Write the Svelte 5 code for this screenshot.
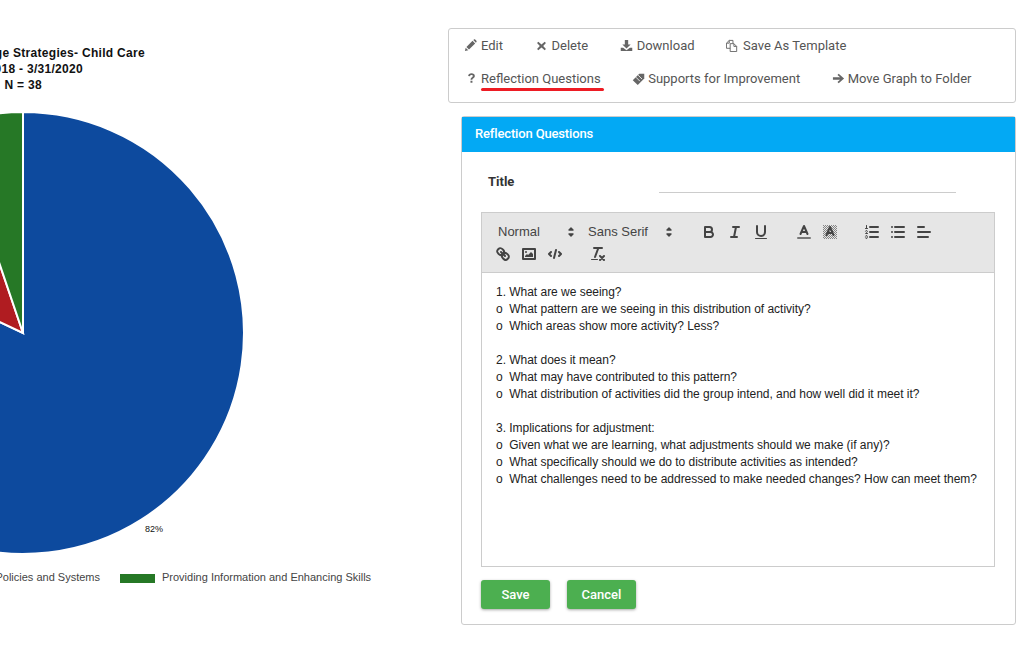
<script>
  const row1 = [
    { icon: "edit", label: "Edit" },
    { icon: "remove", label: "Delete" },
    { icon: "download", label: "Download" },
    { icon: "copy", label: "Save As Template" }
  ];
  const row2 = [
    { icon: "question", label: "Reflection Questions", active: true },
    { icon: "tag", label: "Supports for Improvement" },
    { icon: "arrow", label: "Move Graph to Folder" }
  ];
  const lines = [
    "1. What are we seeing?",
    "o  What pattern are we seeing in this distribution of activity?",
    "o  Which areas show more activity? Less?",
    "",
    "2. What does it mean?",
    "o  What may have contributed to this pattern?",
    "o  What distribution of activities did the group intend, and how well did it meet it?",
    "",
    "3. Implications for adjustment:",
    "o  Given what we are learning, what adjustments should we make (if any)?",
    "o  What specifically should we do to distribute activities as intended?",
    "o  What challenges need to be addressed to make needed changes? How can meet them?"
  ];

  // pie geometry
  const cx = 23, cy = 333, r = 221;
  function point(deg) {
    const a = (deg * Math.PI) / 180;
    return `${(cx + r * Math.sin(a)).toFixed(1)} ${(cy - r * Math.cos(a)).toFixed(1)}`;
  }
  function slice(from, to) {
    const large = to - from > 180 ? 1 : 0;
    return `M${cx} ${cy}L${point(from)}A${r} ${r} 0 ${large} 1 ${point(to)}Z`;
  }
</script>

{#snippet barIcon(name)}
  <svg class="bar-icon" viewBox="0 0 14 14" aria-hidden="true">
    {#if name === "edit"}
      <path d="M1 13l.8-3.6 2.800 2.800zM2.600 8.600l6.600-6.600 2.800 2.800-6.600 6.600zM10 1.200l.8-.6c.4-.3.9-.3 1.200 0l1.400 1.400c.3.3.3.8 0 1.200l-.6.8z" />
    {:else if name === "remove"}
      <path d="M3.600 3L7 6l3.400-3 1.400 1.400L8.800 7.600l3 3.200-1.400 1.400L7 9.200l-3.400 3-1.400-1.400 3-3.200-3-3.200z" />
    {:else if name === "download"}
      <path d="M5.200 1h3.600v5h2.700L7 10.200 2.500 6h2.700zM.8 9.400h2.600L7 12l3.600-2.600h2.600V13H.8z" />
    {:else if name === "copy"}
      <path class="line" d="M3.500 1.500h4v3M.5 10V4.500l3-3v3h-3M.5 10h4M4.500 5h4l3 3v5.500h-7zM8.500 5v3h3" />
    {:else if name === "question"}
      <path d="M3.400 4.200C3.500 2.300 5 1.400 7 1.400c2.100 0 3.600 1.100 3.600 2.900 0 1.400-.9 2-1.800 2.600-.7.5-.9.8-.9 1.500H6c0-1.300.3-1.900 1.200-2.500.8-.6 1.200-.9 1.200-1.500 0-.7-.6-1.100-1.400-1.100-.9 0-1.500.5-1.600 1.400zM5.900 9.500h2.100v2.200H5.900z" />
    {:else if name === "tag"}
      <path d="M.8 8.800L7.800 1.800h5.400v5.200l-7 7z" />
      <path class="cut" d="M4.200 5.600l4.200 4.200M6.600 3.400l4.200 4.200" />
    {:else}
      <path d="M7.200 1.800L13 7l-5.800 5.200-1.300-1.400 2.800-2.500H1V5.700h7.700L5.900 3.200z" />
    {/if}
  </svg>
{/snippet}

{#snippet toolIcon(name)}
  <svg class="ql" viewBox="0 0 18 18" aria-hidden="true">
    {#if name === "bold"}
      <path d="M5,4H9.500A2.500,2.500,0,0,1,12,6.500v0A2.500,2.500,0,0,1,9.500,9H5V4Z" />
      <path d="M5,9h5.500A2.500,2.500,0,0,1,13,11.500v0A2.500,2.500,0,0,1,10.500,14H5V9Z" />
    {:else if name === "italic"}
      <path d="M7 4h6M5 14h6M8 14l2-10" />
    {:else if name === "underline"}
      <path d="M5,3V9a4,4,0,0,0,4,4h0a4,4,0,0,0,4-4V3" />
      <rect class="solid" x="3" y="15" width="12" height="1" rx="0.5" />
    {:else if name === "color"}
      <path d="M5.500 11L9 3l3.500 8M11.630 9H6.380" />
      <path class="under" d="M3 15h12" />
    {:else if name === "background"}
      <defs>
        <pattern id="hatch" width="2" height="2" patternUnits="userSpaceOnUse">
          <rect class="solid" width="1" height="1" />
          <rect class="solid" x="1" y="1" width="1" height="1" />
        </pattern>
      </defs>
      <rect class="hatch" x="2" y="2" width="14" height="14" />
      <path d="M5.500 12L9 4l3.500 8M11.630 10H6.380" />
    {:else if name === "ordered"}
      <path d="M7 4h8M7 9h8M7 14h8" />
      <path class="thin" d="M2.500 5.500h2M3.500 2.500v3M4.500 10.500h-2c0-.234 1.850-1.076 1.850-2.234A.959.959 0 0 0 2.500 8.156M2.500 14.846a.959.959 0 0 0 1.850-.109A.7.7 0 0 0 3.750 14a.688.688 0 0 0 .6-.736.959.959 0 0 0-1.850-.109" />
    {:else if name === "bullet"}
      <path d="M6 4h9M6 9h9M6 14h9M3 4h0M3 9h0M3 14h0" />
    {:else if name === "align"}
      <path d="M3 9h12M3 14h10M3 4h6" />
    {:else if name === "link"}
      <path d="M7 7l4 4" />
      <path d="M8.900,4.577a3.476,3.476,0,0,1,.36,4.679A3.476,3.476,0,0,1,4.577,8.900C3.185,7.500,2.035,6.400,4.217,4.217S7.500,3.185,8.900,4.577Z" />
      <path d="M13.423,9.100a3.476,3.476,0,0,0-4.679-.36,3.476,3.476,0,0,0,.36,4.679c1.392,1.392,2.500,2.542,4.679.36S14.815,10.500,13.423,9.100Z" />
    {:else if name === "image"}
      <rect x="3" y="4" width="12" height="10" />
      <circle class="solid" cx="6" cy="7" r="1" />
      <path class="solid" d="M5 12v-1l2-2 1 1 3-3 2 2v3z" />
    {:else if name === "code"}
      <path d="M5 7L3 9l2 2M13 7l2 2-2 2M10 5L8 13" />
    {:else}
      <path d="M5 3h8M6 12L9.350 3M11 11l4 4M15 11l-4 4" />
      <rect class="solid" x="2" y="14" width="7" height="1" rx="0.5" />
    {/if}
  </svg>
{/snippet}

{#snippet picker(label, cls)}
  <span class="picker {cls}">
    <span class="picker-label">{label}</span>
    <svg viewBox="0 0 18 18" aria-hidden="true">
      <path d="M7 11l2 2 2-2zM7 7l2-2 2 2z" />
    </svg>
  </span>
{/snippet}

<div class="page">
  <section class="chart">
    <svg width="448" height="653" viewBox="0 0 448 653">
      <g class="chart-title">
        <text x="145" y="57">Distribution of Change Strategies- Child Care</text>
        <text x="83" y="73">10/1/2018 - 3/31/2020</text>
        <text x="42" y="89">N = 38</text>
      </g>
      <path class="wedge" fill="#0d4a9e" d={slice(0, 295.2)} />
      <path class="wedge" fill="#b01c21" d={slice(295.2, 341.3)} />
      <path class="wedge" fill="#267826" d={slice(341.3, 360)} />
      <text class="pct" x="145" y="532">82%</text>
      <text class="legend" x="100" y="581" text-anchor="end">Enhancing Policies and Systems</text>
      <rect x="120" y="574" width="35" height="9" fill="#267826" />
      <text class="legend" x="162" y="581">Providing Information and Enhancing Skills</text>
    </svg>
  </section>

  <section class="side">
    <div class="actions">
      <div class="action-row first">
        {#each row1 as item}
          <span class="action">{@render barIcon(item.icon)}{item.label}</span>
        {/each}
      </div>
      <div class="action-row second">
        {#each row2 as item}
          <span class="action" class:active={item.active}>{@render barIcon(item.icon)}{item.label}</span>
        {/each}
      </div>
    </div>

    <div class="card">
      <div class="card-head">Reflection Questions</div>
      <div class="card-body">
        <div class="title-row">
          <span class="title-label">Title</span>
          <span class="title-input"></span>
        </div>
        <div class="editor">
          <div class="toolbar">
            <div class="tool-row">
              {@render picker("Normal", "p-size")}
              {@render picker("Sans Serif", "p-font")}
              <span class="group g-format">
                {#each ["bold", "italic", "underline"] as t}<span class="tool">{@render toolIcon(t)}</span>{/each}
              </span>
              <span class="group g-color">
                {#each ["color", "background"] as t}<span class="tool">{@render toolIcon(t)}</span>{/each}
              </span>
              <span class="group g-list">
                {#each ["ordered", "bullet", "align"] as t}<span class="tool">{@render toolIcon(t)}</span>{/each}
              </span>
            </div>
            <div class="tool-row">
              {#each ["link", "image", "code"] as t}<span class="tool">{@render toolIcon(t)}</span>{/each}
              <span class="tool clean">{@render toolIcon("clean")}</span>
            </div>
          </div>
          <div class="content">
            {#each lines as line}
              <p>{line || "\u00a0"}</p>
            {/each}
          </div>
        </div>
        <div class="buttons">
          <button>Save</button>
          <button>Cancel</button>
        </div>
      </div>
    </div>
  </section>
</div>

<style>
  :global(body) {
    background: #fff;
  }

  .page {
    display: flex;
    height: 653px;
    overflow: hidden;
    font-family: Roboto, "Liberation Sans", sans-serif;
    color: #555;
  }

  .chart {
    flex: 0 0 448px;
  }

  .chart svg {
    display: block;
  }

  .chart-title text {
    font: bold 12px "Liberation Sans", Arial, sans-serif;
    letter-spacing: 0.3px;
    fill: #111;
    text-anchor: end;
  }

  .wedge {
    stroke: #fff;
    stroke-width: 2;
  }

  .pct {
    font: 9px "Liberation Sans", Arial, sans-serif;
    fill: #111;
  }

  .legend {
    font: 11px "Liberation Sans", Arial, sans-serif;
    fill: #444;
  }

  .side {
    flex: 0 0 568px;
    padding-top: 28px;
  }

  .actions {
    box-sizing: border-box;
    height: 75px;
    border: 1px solid #ccc;
    border-radius: 3px;
    padding-left: 15px;
    font-size: 13px;
  }

  .action-row {
    display: flex;
    gap: 31.5px;
    height: 33px;
    align-items: center;
  }

  .first .action {
    gap: 4px;
  }

  .second {
    padding-left: 1px;
  }

  .action {
    position: relative;
    display: flex;
    align-items: center;
    gap: 3px;
    white-space: nowrap;
  }

  .active::after {
    content: "";
    position: absolute;
    left: 16px;
    right: -3px;
    bottom: -5px;
    height: 3px;
    border-radius: 2px;
    background: #ed1c24;
  }

  .bar-icon {
    width: 13px;
    height: 13px;
    fill: #666;
    flex: none;
  }

  .bar-icon .line {
    fill: none;
    stroke: #666;
    stroke-width: 1;
  }

  .bar-icon .cut {
    fill: none;
    stroke: #fff;
    stroke-width: 0.9;
  }

  .card {
    box-sizing: border-box;
    width: 555px;
    height: 509px;
    margin: 13px 0 0 13px;
    border: 1px solid #ccc;
    border-radius: 3px;
  }

  .card-head {
    height: 35px;
    line-height: 34px;
    padding-left: 13px;
    background: #03a9f4;
    color: #fff;
    font-size: 13px;
    font-weight: 500;
    letter-spacing: -0.15px;
  }

  .card-body {
    padding: 0 19px;
  }

  .title-row {
    display: flex;
    height: 60px;
    position: relative;
  }

  .title-label {
    margin: 22px 0 0 7px;
    font-size: 13px;
    font-weight: 700;
    color: #333;
  }

  .title-input {
    width: 297px;
    height: 40px;
    margin-left: 145px;
    border-bottom: 1px solid #ccc;
  }

  .editor {
    box-sizing: border-box;
    width: 514px;
    height: 355px;
    border: 1px solid #ccc;
  }

  .toolbar {
    box-sizing: border-box;
    height: 60px;
    padding: 8px 0 0 8px;
    background: #e6e6e6;
    border-bottom: 1px solid #ccc;
  }

  .tool-row {
    display: flex;
    align-items: center;
    height: 22px;
  }

  .picker {
    box-sizing: border-box;
    display: flex;
    align-items: center;
    justify-content: space-between;
    font: 500 13px "Liberation Sans", Arial, sans-serif;
    color: #444;
    padding-left: 8px;
  }

  .picker-label {
    margin-top: -1px;
  }

  .picker svg {
    width: 18px;
    height: 18px;
    fill: #444;
    stroke: #444;
    stroke-width: 1.4;
    stroke-linejoin: round;
  }

  .p-size {
    width: 90px;
  }

  .p-font {
    width: 98px;
  }

  .group {
    display: flex;
  }

  .g-format {
    margin-left: 18px;
  }

  .g-color {
    margin-left: 17px;
  }

  .g-list {
    margin-left: 16px;
  }

  .tool {
    display: flex;
    justify-content: center;
    width: 26px;
  }

  .clean {
    margin-left: 17px;
  }

  .ql {
    width: 18px;
    height: 18px;
    fill: none;
    stroke: #444;
    stroke-width: 2;
    stroke-linecap: round;
    stroke-linejoin: round;
  }

  .ql .solid {
    fill: #444;
    stroke: none;
  }

  .ql .thin {
    stroke-width: 1;
  }

  .ql .under {
    stroke: #777;
  }

  .ql .hatch {
    fill: url(#hatch);
    stroke: none;
    opacity: 0.6;
  }

  .content {
    padding: 11px 14px;
    font: 12px "Liberation Sans", Arial, sans-serif;
    letter-spacing: -0.025px;
    color: #222;
  }

  .content p {
    margin: 0;
    line-height: 17px;
    white-space: pre;
  }

  .buttons {
    display: flex;
    gap: 17px;
    margin-top: 13px;
  }

  .buttons button {
    width: 69px;
    height: 29px;
    padding: 0;
    border: 0;
    border-radius: 3px;
    background: #4caf50;
    color: #fff;
    font: 500 13px Roboto, sans-serif;
    box-shadow: 0 1px 3px rgba(0, 0, 0, 0.35);
  }
</style>
